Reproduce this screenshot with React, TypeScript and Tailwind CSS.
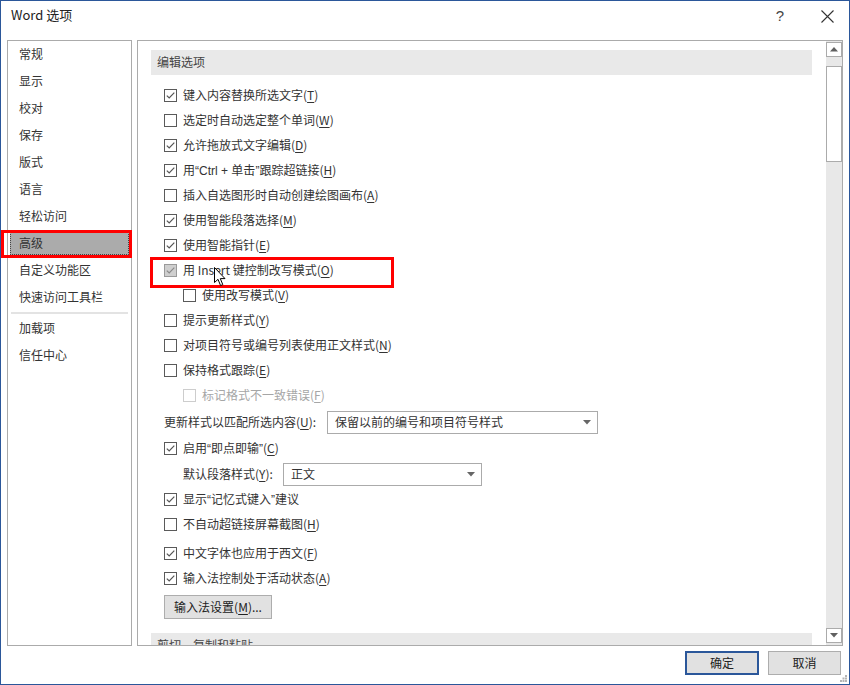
import type { ReactNode } from "react";

const FONT = '"Noto Sans CJK SC", "Noto Sans", sans-serif';
const LATIN = '"Liberation Sans", "Noto Sans CJK SC", sans-serif';

const navItems = [
  "常规",
  "显示",
  "校对",
  "保存",
  "版式",
  "语言",
  "轻松访问",
  "高级",
  "自定义功能区",
  "快速访问工具栏",
];

function Key({ k }: { k: string }) {
  return (
    <>
      (<span className="underline underline-offset-2">{k}</span>)
    </>
  );
}

// narrow latin quotes, like the dialog's UI font
function Q({ children }: { children: string }) {
  return <span style={{ fontFamily: LATIN }}>{children}</span>;
}

function CheckBox({
  checked,
  disabled,
  grayed,
}: {
  checked?: boolean;
  disabled?: boolean;
  grayed?: boolean;
}) {
  const box = grayed
    ? "border-[#9a9a9a] bg-[#cfcfcf]"
    : disabled
      ? "border-[#cdcdcd] bg-white"
      : "border-[#5a5a5a] bg-white";
  return (
    <span className={`flex h-[13px] w-[13px] shrink-0 items-center justify-center border ${box}`}>
      {checked && (
        <svg width="11" height="11" viewBox="0 0 11 11">
          <path
            d="M1.8 5.6 L4.2 8 L9.3 2.6"
            fill="none"
            stroke={grayed ? "#8a8a8a" : "#555"}
            strokeWidth="1.2"
          />
        </svg>
      )}
    </span>
  );
}

function Row({
  children,
  checked,
  indent,
  disabled,
  grayed,
  className = "",
}: {
  children: ReactNode;
  checked?: boolean;
  indent?: boolean;
  disabled?: boolean;
  grayed?: boolean;
  className?: string;
}) {
  return (
    <div
      className={`flex h-[25px] items-center gap-[6px] ${indent ? "pl-[32px]" : "pl-[13px]"} ${
        disabled ? "text-[#a6a6a6]" : ""
      } ${className}`}
    >
      <CheckBox checked={checked} disabled={disabled} grayed={grayed} />
      <span className="-mt-[1px] whitespace-nowrap">{children}</span>
    </div>
  );
}

function Select({ value, width }: { value: string; width: string }) {
  return (
    <div className={`flex h-[23px] items-center justify-between border border-[#ababab] bg-white pl-[7px] pr-[6px] ${width}`}>
      <span>{value}</span>
      <svg width="8" height="5" viewBox="0 0 8 5">
        <path d="M0 0 L8 0 L4 4.5 Z" fill="#666" />
      </svg>
    </div>
  );
}

function SectionHeader({ title, className = "" }: { title: string; className?: string }) {
  return (
    <div className={`flex h-[25px] shrink-0 items-center bg-[#e9e9e9] pb-[1px] pl-[6px] text-[#444] ${className}`}>
      {title}
    </div>
  );
}

function ScrollArrow({ up }: { up?: boolean }) {
  return (
    <div className="flex h-[15px] w-[16px] items-center justify-center border border-[#ababab] bg-white">
      <svg width="8" height="5" viewBox="0 0 8 5">
        <path d={up ? "M0 4.5 L8 4.5 L4 0 Z" : "M0 0 L8 0 L4 4.5 Z"} fill="#606060" />
      </svg>
    </div>
  );
}

export default function App() {
  return (
    <div
      className="relative flex h-[685px] w-[850px] flex-col overflow-hidden border border-[#2b579a] bg-white text-[12px] leading-none text-[#333]"
      style={{ fontFamily: FONT }}
    >
      {/* title bar */}
      <div className="flex h-[39px] shrink-0 items-start justify-between">
        <div className="pl-[10px] pt-[7px] text-[13px] text-[#222]">Word 选项</div>
        <div className="flex items-start">
          <span className="pt-[7px] text-[15px] text-[#444]" style={{ fontFamily: '"Liberation Sans", sans-serif' }}>
            ?
          </span>
          <svg className="ml-[37px] mr-[15px] mt-[9px]" width="13" height="13" viewBox="0 0 13 13">
            <path d="M0.5 0.5 L12.5 12.5 M12.5 0.5 L0.5 12.5" stroke="#333" strokeWidth="1.1" />
          </svg>
        </div>
      </div>

      {/* body */}
      <div className="flex h-[606px] shrink-0 gap-[5px] pl-[6px] pr-[6px]">
        {/* nav */}
        <div className="w-[125px] shrink-0 border border-[#ababab] bg-white">
          {navItems.map((item) =>
            item === "高级" ? (
              <div key={item} className="h-[27px] px-[2px] pb-[2px] pt-[2px]">
                <div className="flex h-full items-center border border-dotted border-[#444] bg-[#ababab] pb-[1px] pl-[8px]">
                  {item}
                </div>
              </div>
            ) : (
              <div key={item} className="flex h-[27px] items-center pb-[1px] pl-[11px]">
                {item}
              </div>
            ),
          )}
          <div className="mx-[3px] mb-[1px] mt-[1px] h-[2px] bg-[#e3e3e3]" />
          <div className="flex h-[27px] items-center pb-[1px] pl-[11px]">加载项</div>
          <div className="flex h-[27px] items-center pb-[1px] pl-[11px]">信任中心</div>
        </div>

        {/* options panel */}
        <div className="flex w-[706px] shrink-0 border border-[#ababab] bg-white">
          <div className="flex min-w-0 flex-1 flex-col overflow-hidden pl-[13px] pr-[14px] pt-[9px]">
            <SectionHeader title="编辑选项" />
            <div className="mt-[8px] flex flex-col">
              <Row checked>
                键入内容替换所选文字<Key k="T" />
              </Row>
              <Row>
                选定时自动选定整个单词<Key k="W" />
              </Row>
              <Row checked>
                允许拖放式文字编辑<Key k="D" />
              </Row>
              <Row checked>
                用<Q>“Ctrl + </Q>单击<Q>”</Q>跟踪超链接<Key k="H" />
              </Row>
              <Row>
                插入自选图形时自动创建绘图画布<Key k="A" />
              </Row>
              <Row checked>
                使用智能段落选择<Key k="M" />
              </Row>
              <Row checked>
                使用智能指针<Key k="E" />
              </Row>
              <Row checked grayed>
                用 Insert 键控制改写模式<Key k="O" />
              </Row>
              <Row indent>
                使用改写模式<Key k="V" />
              </Row>
              <Row>
                提示更新样式<Key k="Y" />
              </Row>
              <Row>
                对项目符号或编号列表使用正文样式<Key k="N" />
              </Row>
              <Row>
                保持格式跟踪<Key k="E" />
              </Row>
              <Row indent disabled>
                标记格式不一致错误<Key k="F" />
              </Row>
              <div className="flex h-[28px] items-center pl-[13px]">
                <span className="w-[163px] whitespace-nowrap">
                  更新样式以匹配所选内容<Key k="U" />:
                </span>
                <Select value="保留以前的编号和项目符号样式" width="w-[271px]" />
              </div>
              <Row checked>
                启用<Q>“</Q>即点即输<Q>”</Q>
                <Key k="C" />
              </Row>
              <div className="flex h-[26px] items-center pl-[32px]">
                <span className="w-[100px] whitespace-nowrap">
                  默认段落样式<Key k="Y" />:
                </span>
                <Select value="正文" width="w-[199px]" />
              </div>
              <Row checked>
                显示<Q>“</Q>记忆式键入<Q>”</Q>建议
              </Row>
              <Row>
                不自动超链接屏幕截图<Key k="H" />
              </Row>
              <Row checked className="mt-[4px]">
                中文字体也应用于西文<Key k="F" />
              </Row>
              <Row checked>
                输入法控制处于活动状态<Key k="A" />
              </Row>
              <div className="ml-[13px] mt-[4px] flex h-[24px] w-[108px] items-center justify-center border border-[#adadad] bg-[#e1e1e1] pb-[1px] text-[#222]">
                输入法设置<Key k="M" />...
              </div>
            </div>
            <SectionHeader title="剪切、复制和粘贴" className="mt-[14px]" />
          </div>

          {/* scrollbar */}
          <div className="flex w-[16px] shrink-0 flex-col bg-[#e8e8e8] pt-[1px] pb-[2px]">
            <ScrollArrow up />
            <div className="mt-[9px] h-[96px] w-[16px] border border-[#ababab] bg-white" />
            <div className="flex-1" />
            <ScrollArrow />
          </div>
        </div>
      </div>

      {/* footer */}
      <div className="flex flex-1 items-start justify-end gap-[9px] pr-[8px] pt-[5px]">
        <div className="flex h-[24px] w-[74px] items-center justify-center border-2 border-[#2b579a] bg-[#e1e1e1] pb-[1px] text-[#222]">
          确定
        </div>
        <div className="flex h-[24px] w-[73px] items-center justify-center border border-[#adadad] bg-[#e1e1e1] pb-[1px] text-[#222]">
          取消
        </div>
      </div>

      {/* resize grip */}
      <svg className="absolute bottom-[2px] right-[2px]" width="7" height="7" viewBox="0 0 7 7">
        <rect x="5" y="0" width="2" height="2" fill="#b5b5b5" />
        <rect x="2.5" y="2.5" width="2" height="2" fill="#b5b5b5" />
        <rect x="5" y="2.5" width="2" height="2" fill="#b5b5b5" />
        <rect x="0" y="5" width="2" height="2" fill="#b5b5b5" />
        <rect x="2.5" y="5" width="2" height="2" fill="#b5b5b5" />
        <rect x="5" y="5" width="2" height="2" fill="#b5b5b5" />
      </svg>

      {/* annotation highlights */}
      <div className="pointer-events-none absolute left-0 top-[229px] h-[28px] w-[131px] border-[3px] border-[#ff0000]" />
      <div className="pointer-events-none absolute left-[149px] top-[256px] h-[31px] w-[244px] border-[3px] border-[#ff0000]" />

      {/* mouse cursor */}
      <svg className="absolute left-[213px] top-[266px]" width="13" height="20" viewBox="0 0 13 20">
        <path
          d="M0.5 0.5 L0.5 15.5 L4 12.3 L6.6 18.6 L8.8 17.6 L6.3 11.6 L11 11.6 Z"
          fill="white"
          stroke="black"
          strokeWidth="1"
          strokeLinejoin="miter"
        />
      </svg>
    </div>
  );
}
